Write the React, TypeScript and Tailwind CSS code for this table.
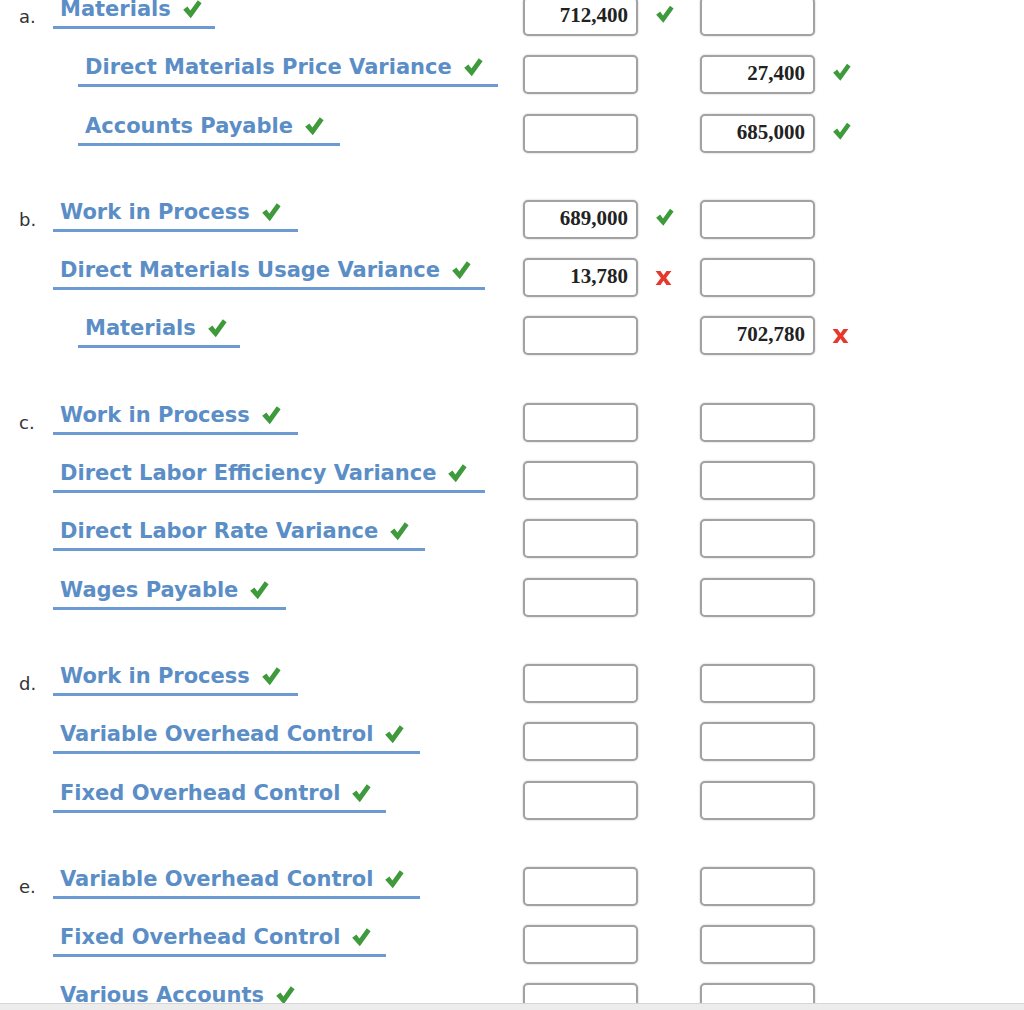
import React from "react";

type Mark = "check" | "x" | undefined;
type Row = {
  label: string;
  indent?: boolean;
  w: string;
  debit?: string;
  debitMark?: Mark;
  credit?: string;
  creditMark?: Mark;
};
type Section = { letter: string; rows: Row[] };

const sections: Section[] = [
  {
    letter: "a.",
    rows: [
      { label: "Materials", w: "w-[162px]", debit: "712,400", debitMark: "check" },
      { label: "Direct Materials Price Variance", indent: true, w: "w-[420px]", credit: "27,400", creditMark: "check" },
      { label: "Accounts Payable", indent: true, w: "w-[262px]", credit: "685,000", creditMark: "check" },
    ],
  },
  {
    letter: "b.",
    rows: [
      { label: "Work in Process", w: "w-[245px]", debit: "689,000", debitMark: "check" },
      { label: "Direct Materials Usage Variance", w: "w-[432px]", debit: "13,780", debitMark: "x" },
      { label: "Materials", indent: true, w: "w-[162px]", credit: "702,780", creditMark: "x" },
    ],
  },
  {
    letter: "c.",
    rows: [
      { label: "Work in Process", w: "w-[245px]" },
      { label: "Direct Labor Efficiency Variance", w: "w-[432px]" },
      { label: "Direct Labor Rate Variance", w: "w-[372px]" },
      { label: "Wages Payable", w: "w-[233px]" },
    ],
  },
  {
    letter: "d.",
    rows: [
      { label: "Work in Process", w: "w-[245px]" },
      { label: "Variable Overhead Control", w: "w-[367px]" },
      { label: "Fixed Overhead Control", w: "w-[333px]" },
    ],
  },
  {
    letter: "e.",
    rows: [
      { label: "Variable Overhead Control", w: "w-[367px]" },
      { label: "Fixed Overhead Control", w: "w-[333px]" },
      { label: "Various Accounts", w: "w-[280px]" },
    ],
  },
];

function CheckIcon({ className }: { className?: string }) {
  return (
    <svg viewBox="0 0 20 20" className={className} aria-hidden="true">
      <path
        d="M1.2 10.8 L5.4 7.4 L8.4 11.6 L15.8 1.2 L19.6 4.2 L8.8 19.2 Z"
        fill="#3e9a3a"
      />
    </svg>
  );
}

function XIcon({ className }: { className?: string }) {
  return (
    <svg viewBox="0 0 17 15" className={className} aria-hidden="true">
      <path d="M0 0 H5.3 L8.5 4.5 L11.7 0 H17 L11.3 7.5 L17 15 H11.7 L8.5 10.5 L5.3 15 H0 L5.7 7.5 Z" fill="#e8382d" />
    </svg>
  );
}

function Box({ value }: { value?: string }) {
  return (
    <div className="box-border h-[39px] w-[115px] shrink-0 rounded-[5px] border-2 border-[#a2a2a2] bg-white pr-[8px] text-right font-['Liberation_Serif',serif] text-[21px] font-bold leading-[32px] text-[#222] shadow-[0_0_2px_rgba(0,0,0,0.25)]">
      {value ?? ""}
    </div>
  );
}

function MarkSlot({ mark }: { mark: Mark }) {
  return (
    <div className="h-[39px] w-[62px] shrink-0 pl-[17px]">
      {mark === "check" && <CheckIcon className="mt-[7px] block h-[20px] w-[19px]" />}
      {mark === "x" && <XIcon className="mt-[13px] block h-[14px] w-[17px]" />}
    </div>
  );
}

function RowView({ row, letter }: { row: Row; letter?: string }) {
  return (
    <div className="flex h-[58.3px] items-start">
      <div className="w-[53px] shrink-0 pl-[19px] pt-[10px] font-['DejaVu_Sans',sans-serif] text-[18px] leading-[20px] text-[#333]">
        {letter ?? ""}
      </div>
      <div className="w-[470px] shrink-0">
        <div
          className={`${row.indent ? "ml-[25px]" : ""} ${row.w} box-border whitespace-nowrap border-b-[3px] border-[#6b9bd0] pb-[5px] pl-[7px] font-['DejaVu_Sans',sans-serif] text-[21px] font-bold leading-[24px] text-[#5b8ec6]`}
        >
          {row.label}
          <CheckIcon className="ml-[11px] inline-block h-[20px] w-[20px] align-[-3px]" />
        </div>
      </div>
      <Box value={row.debit} />
      <MarkSlot mark={row.debitMark} />
      <Box value={row.credit} />
      <MarkSlot mark={row.creditMark} />
    </div>
  );
}

export default function App() {
  return (
    <div className="relative h-[1010px] w-[1024px] overflow-hidden bg-white">
      <div className="mt-[-3px] flex flex-col gap-[28px]">
        {sections.map((s) => (
          <div key={s.letter} className="flex flex-col">
            {s.rows.map((r, i) => (
              <RowView key={i} row={r} letter={i === 0 ? s.letter : undefined} />
            ))}
          </div>
        ))}
      </div>
      <div className="absolute bottom-0 left-0 h-[7px] w-full border-t border-[#d6d6d6] bg-[#ececec]" />
    </div>
  );
}
